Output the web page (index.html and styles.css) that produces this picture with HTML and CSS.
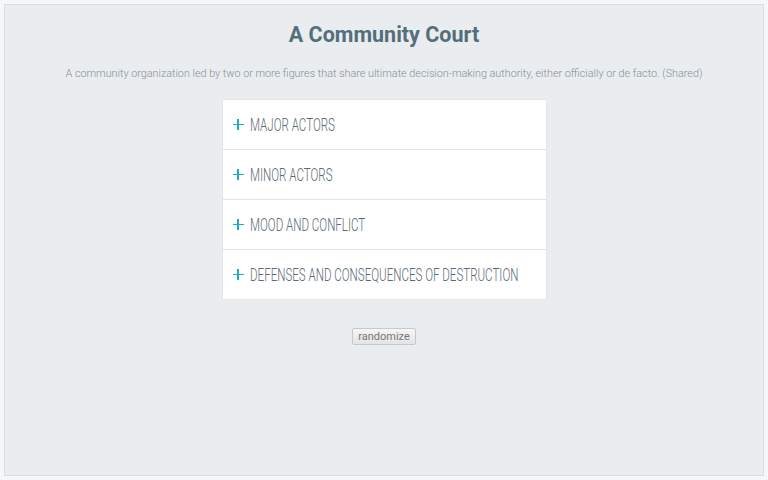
FILE: index.html
```html
<!DOCTYPE html>
<html>
<head>
<meta charset="utf-8">
<link rel="stylesheet" href="styles.css">
</head>
<body>
<div class="frame">
  <h1 class="title">A Community Court</h1>
  <p class="desc">A community organization led by two or more figures that share ultimate decision-making authority, either officially or de facto. (Shared)</p>
  <div class="accordion">
    <div class="row"><span class="plus"></span><span class="label">MAJOR ACTORS</span></div>
    <div class="row"><span class="plus"></span><span class="label">MINOR ACTORS</span></div>
    <div class="row"><span class="plus"></span><span class="label">MOOD AND CONFLICT</span></div>
    <div class="row"><span class="plus"></span><span class="label">DEFENSES AND CONSEQUENCES OF DESTRUCTION</span></div>
  </div>
  <div class="actions"><button class="btn">randomize</button></div>
</div>
</body>
</html>
```
FILE: styles.css
```css
html, body {
  margin: 0;
  padding: 0;
  background: #f5f6f7;
}
body {
  padding: 4px;
  font-family: Roboto, "Liberation Sans", sans-serif;
}
.frame {
  box-sizing: border-box;
  height: 472px;
  border: 1px solid #d9dcdf;
  background: #e9edf0;
  display: flex;
  flex-direction: column;
  align-items: center;
}
.title {
  margin: 17px 0 0;
  font-size: 21.5px;
  line-height: 26px;
  font-weight: 700;
  color: #546e7a;
}
.desc {
  margin: 19px 0 0;
  font-size: 10.8px;
  line-height: 14px;
  font-weight: 300;
  color: #858f95;
}
.accordion {
  margin-top: 18px;
  width: 325px;
  background: #fff;
  border: 1px solid #e2e6e9;
  border-radius: 2px;
  box-sizing: border-box;
}
.row {
  height: 49px;
  display: flex;
  align-items: center;
  padding-left: 10px;
  border-top: 1px solid #dfe3e6;
  overflow: hidden;
}
.row:first-child {
  border-top: none;
}
.plus {
  position: relative;
  flex: 0 0 11px;
  height: 11px;
  margin-right: 6px;
  margin-top: -1px;
}
.plus::before, .plus::after {
  content: "";
  position: absolute;
  background: #22abbb;
}
.plus::before {
  left: 0;
  right: 0;
  top: 5px;
  height: 1.5px;
}
.plus::after {
  top: 0;
  bottom: 0;
  left: 4.75px;
  width: 1.5px;
}
.label {
  flex: 0 0 auto;
  display: inline-block;
  font-family: Roboto, "Liberation Sans", sans-serif;
  font-weight: 300;
  font-size: 17.5px;
  color: #5b6a75;
  transform: scaleX(0.66);
  transform-origin: left center;
  white-space: nowrap;
  margin-top: 1px;
}
.actions {
  margin-top: 25px;
}
.btn {
  font-family: Roboto, "Liberation Sans", sans-serif;
  font-size: 11px;
  color: #777;
  background: linear-gradient(#f6f6f6, #e4e4e4);
  border: 1px solid #c8c8c8;
  border-radius: 2px;
  padding: 1px 5px;
  height: 17px;
}
```
